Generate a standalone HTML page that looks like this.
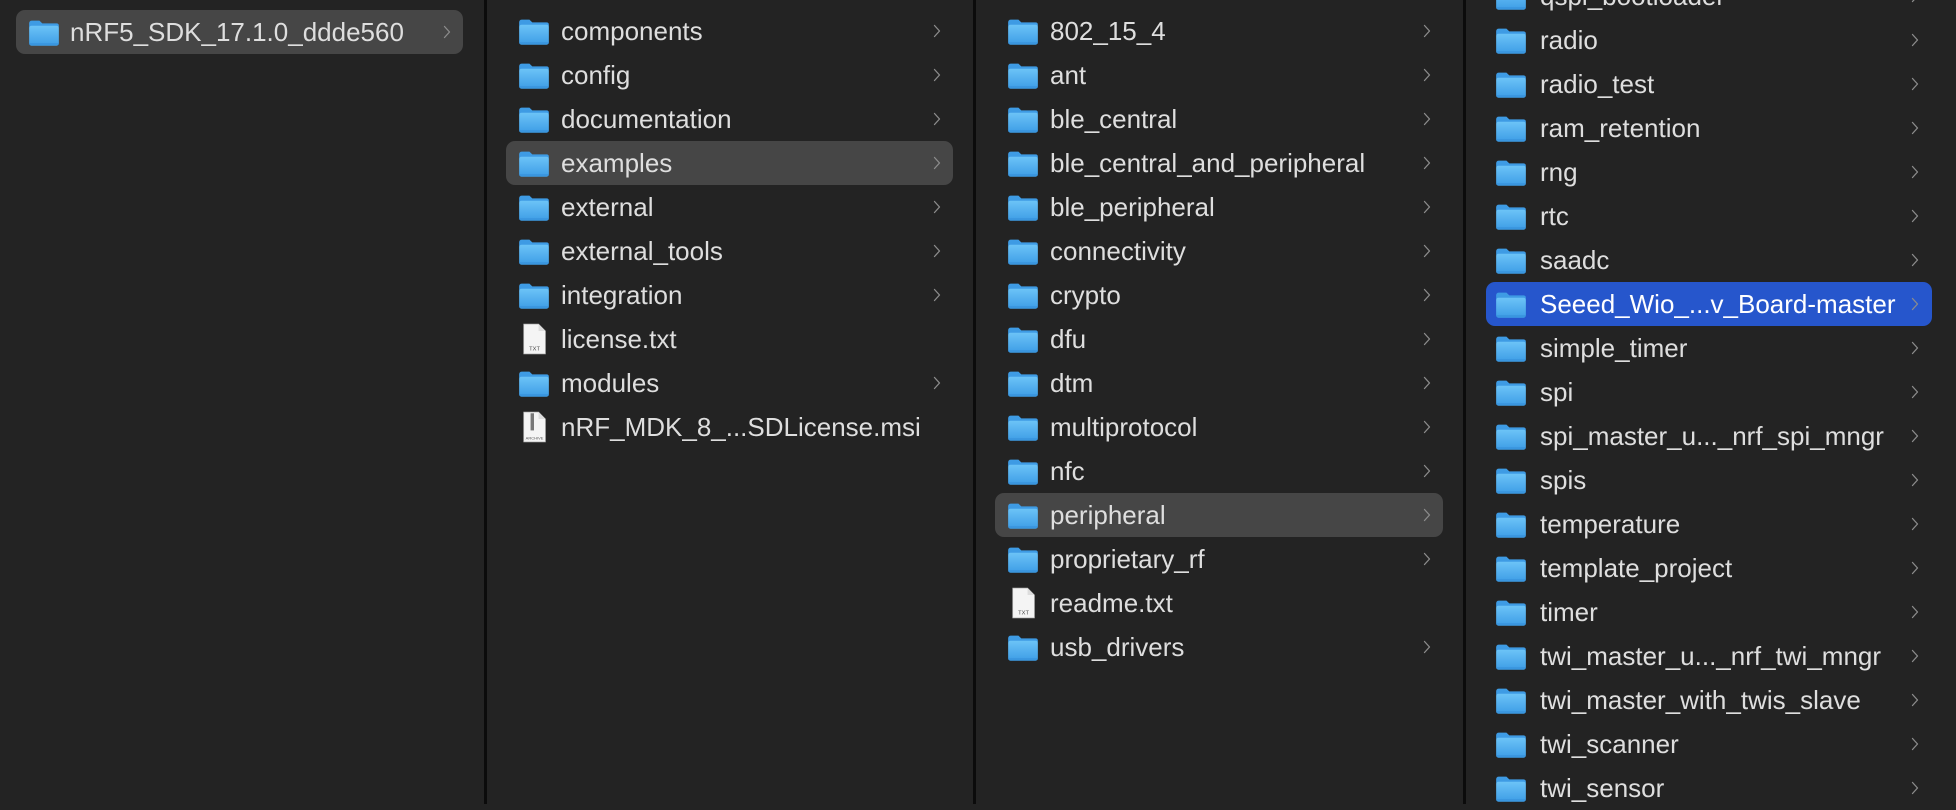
<!DOCTYPE html>
<html><head><meta charset="utf-8"><style>
*{margin:0;padding:0;box-sizing:border-box}
body{width:1956px;height:804px;background:#232323;overflow:hidden;position:relative;font-family:"Liberation Sans",sans-serif;}
.div{position:absolute;top:0;width:3px;height:804px;background:#0b0b0b}
.r{position:absolute;height:44px;border-radius:9px}
.r .ic{position:absolute;top:6px;width:32px;height:32px}
.r .t{position:absolute;top:0;line-height:44px;font-size:26px;color:#dedede;white-space:nowrap}
.r .ch{position:absolute;top:15px;width:8px;height:14px}
.sel{background:#464646}
.blue{background:#2656cc}
.blue .t{color:#fff}
</style></head><body>
<svg width="0" height="0" style="position:absolute">
<defs>
<linearGradient id="g" x1="0" y1="0" x2="0" y2="1"><stop offset="0" stop-color="#6cc3f7"/><stop offset="1" stop-color="#3d9de6"/></linearGradient>
<symbol id="f" viewBox="0 0 28 28"><path d="M1 6.5 Q1 4 3.5 4 H10 L12.5 6.5 H25 Q27 6.5 27 8.5 V10 H1Z" fill="#3e9be4"/><rect x="1" y="8.5" width="26" height="17.5" rx="2" fill="url(#g)"/><rect x="1" y="24" width="26" height="1" fill="#2f86cf" opacity=".6"/></symbol>
<symbol id="c" viewBox="0 0 8 14"><path d="M1.5 1.5 L6.5 7 L1.5 12.5" fill="none" stroke="#8c8c8c" stroke-width="1.3" stroke-linecap="round" stroke-linejoin="round"/></symbol>
<symbol id="d" viewBox="0 0 28 28"><path d="M5 1 H18 L24 7 V27 H5Z" fill="#f4f4f4" stroke="#bbb" stroke-width=".6"/><path d="M18 1 V7 H24" fill="#ddd"/><text x="14.5" y="24" font-size="5" text-anchor="middle" fill="#444" font-family="Liberation Sans">TXT</text></symbol>
<symbol id="a" viewBox="0 0 28 28"><path d="M5 1 H18 L24 7 V27 H5Z" fill="#f4f4f4" stroke="#bbb" stroke-width=".6"/><path d="M18 1 V7 H24" fill="#ddd"/><rect x="11" y="2" width="3" height="15" fill="#777"/><text x="14.5" y="25" font-size="3.5" text-anchor="middle" fill="#555" font-family="Liberation Sans">ARCHIVE</text></symbol>
</defs></svg>
<div class="div" style="left:484px"></div>
<div class="div" style="left:973px"></div>
<div class="div" style="left:1463px"></div>

<div class="r sel" style="left:16px;top:10px;width:447px"><svg class="ic" style="left:12px"><use href="#f"/></svg><span class="t" style="left:54px">nRF5_SDK_17.1.0_ddde560</span><svg class="ch" style="left:427px"><use href="#c"/></svg></div>

<div id="c2"></div><div id="c3"></div><div id="c4"></div>
<script>
function col(items,x0,w,top0,icx,tx,chx){
 let h='';
 items.forEach((it,i)=>{
  let [name,type,cls]=it;
  let top=top0+44*i;
  let icon=type==='f'?'#f':(type==='t'?'#d':'#a');
  h+=`<div class="r ${cls||''}" style="left:${x0}px;top:${top}px;width:${w}px"><svg class="ic" style="left:${icx}px"><use href="${icon}"/></svg><span class="t" style="left:${tx}px">${name}</span>${type==='f'?`<svg class="ch" style="left:${chx}px"><use href="#c"/></svg>`:''}</div>`;
 });
 return h;
}
const c2=[['components','f'],['config','f'],['documentation','f'],['examples','f','sel'],['external','f'],['external_tools','f'],['integration','f'],['license.txt','t'],['modules','f'],['nRF_MDK_8_...SDLicense.msi','a']];
const c3=[['802_15_4','f'],['ant','f'],['ble_central','f'],['ble_central_and_peripheral','f'],['ble_peripheral','f'],['connectivity','f'],['crypto','f'],['dfu','f'],['dtm','f'],['multiprotocol','f'],['nfc','f'],['peripheral','f','sel'],['proprietary_rf','f'],['readme.txt','t'],['usb_drivers','f']];
const c4=[['qspi_bootloader','f'],['radio','f'],['radio_test','f'],['ram_retention','f'],['rng','f'],['rtc','f'],['saadc','f'],['Seeed_Wio_...v_Board-master','f','blue'],['simple_timer','f'],['spi','f'],['spi_master_u..._nrf_spi_mngr','f'],['spis','f'],['temperature','f'],['template_project','f'],['timer','f'],['twi_master_u..._nrf_twi_mngr','f'],['twi_master_with_twis_slave','f'],['twi_scanner','f'],['twi_sensor','f']];
document.getElementById('c2').outerHTML=col(c2,506,447,9,12,55,427);
document.getElementById('c3').outerHTML=col(c3,995,448,9,12,55,428);
document.getElementById('c4').outerHTML=col(c4,1486,446,-26,9,54,425);
</script>
</body></html>
